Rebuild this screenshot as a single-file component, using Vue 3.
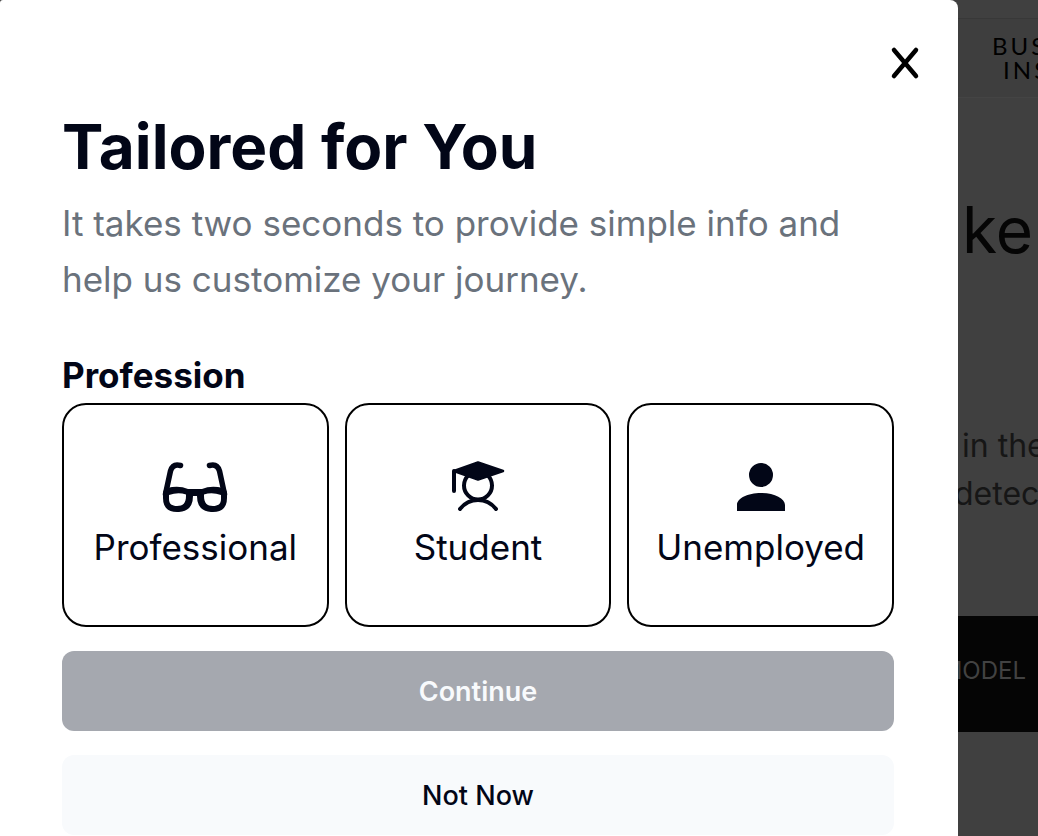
<script setup>
import { ref } from 'vue'

const options = ['Professional', 'Student', 'Unemployed']
const selected = ref('')
</script>

<template>
  <div class="screen">
    <div class="page" aria-hidden="true">
      <header class="brand">BUSINESS<br />INSIDER</header>
      <p class="headline">ke</p>
      <p class="copy">in the<br />detect</p>
      <div class="model">MODEL</div>
    </div>

    <section class="dialog" role="dialog" aria-labelledby="dialog-title">
      <div class="top">
        <button class="close" type="button" aria-label="Close">
          <svg viewBox="0 0 32 36" width="32" height="36">
            <path d="M5 5 27 31M27 5 5 31" fill="none" stroke="#000" stroke-width="4.5" stroke-linecap="round" />
          </svg>
        </button>
      </div>
      <h1 id="dialog-title">Tailored for You</h1>
      <p class="intro">It takes two seconds to provide simple info and help us customize your journey.</p>

      <h2 id="profession">Profession</h2>
      <div class="cards" role="group" aria-labelledby="profession">
        <button
          v-for="option in options"
          :key="option"
          class="card"
          type="button"
          :aria-pressed="selected === option"
          @click="selected = option"
        >
          <svg v-if="option === 'Professional'" class="icon" viewBox="0 0 72 72">
            <path d="M21.500 14.500C16 13 13 15 11.500 20L6.500 43M50.500 14.500C56 13 59 15 60.500 20L65.500 43" fill="none" stroke="currentColor" stroke-width="5.5" stroke-linecap="round" />
            <path fill="currentColor" fill-rule="evenodd" d="M4 43Q4 38 8 37Q20 34 29 38H43Q52 34 64 37Q68 38 68 43V47Q68 61 54 61H52Q38 60 38 45H34Q34 60 20 61H18Q4 61 4 47ZM10 44V48C10 53 13 55 18 55C24 55 27 52 27 45V43.500Q19 41 10 44ZM45 43.500V45C45 52 48 55 54 55C59 55 62 53 62 48V44Q53 41 45 43.500Z" />
          </svg>
          <svg v-else-if="option === 'Student'" class="icon" viewBox="0 0 72 72">
            <circle cx="36" cy="34.5" r="14" fill="none" stroke="currentColor" stroke-width="4" />
            <path d="M12 20V40M18 58Q25 49 36 49T54 58" fill="none" stroke="currentColor" stroke-width="4" stroke-linecap="round" />
            <path d="m36 11.500 25 8.500-25 8.500-24-8.500Z" fill="currentColor" stroke="currentColor" stroke-width="2.5" stroke-linejoin="round" />
          </svg>
          <svg v-else class="icon" viewBox="0 0 24 24">
            <path fill="currentColor" d="M12 4a4 4 0 1 1 0 8a4 4 0 0 1 0-8m0 10c4.420 0 8 1.790 8 4v2H4v-2c0-2.210 3.580-4 8-4" />
          </svg>
          <span>{{ option }}</span>
        </button>
      </div>

      <button class="action continue" type="button">Continue</button>
      <button class="action later" type="button">Not Now</button>
    </section>
  </div>
</template>

<style>
body {
  background: #404040;
}
</style>

<style scoped>
* {
  box-sizing: border-box;
}
.screen {
  position: relative;
  height: 100vh;
  overflow: hidden;
  background: #404040;
  font-family: Inter, "Liberation Sans", sans-serif;
}
button {
  font: inherit;
  cursor: pointer;
}
h1,
h2,
p {
  margin: 0;
}
.page {
  display: flex;
  flex-direction: column;
  padding: 18px 0 0 calc(100% - 84px);
  height: 100%;
  white-space: nowrap;
}
.brand {
  width: max-content;
  height: 80px;
  padding: 15px 0 0 38px;
  border-top: 1px solid #383838;
  border-bottom: 1px solid #444;
  background: #3e3e3e;
  color: #000;
  font: 24px/24px Lato, sans-serif;
  letter-spacing: 3px;
  text-align: center;
}
.headline {
  margin-top: 92px;
  padding-left: 8px;
  color: #050505;
  font-size: 64px;
  line-height: 80px;
}
.copy {
  margin-top: 152px;
  color: #161616;
  font-size: 32px;
  line-height: 48px;
  text-indent: 8px;
}
.model {
  display: flex;
  align-items: center;
  justify-content: flex-end;
  height: 116px;
  margin-top: 98px;
  padding: 0 12px 8px 0;
  background: #050505;
  color: #424242;
  font-size: 24px;
}
.dialog {
  position: absolute;
  top: 0;
  left: 0;
  display: flex;
  flex-direction: column;
  width: calc(100% - 80px);
  min-height: 100%;
  padding: 45px 64px 0 62px;
  border-radius: 3px 8px 0 0;
  background: #fff;
  color: #020617;
}
.top {
  display: flex;
  justify-content: flex-end;
  height: 70px;
  margin-right: -27px;
}
.close {
  width: 32px;
  height: 36px;
  padding: 0;
  border: 0;
  background: none;
}
svg {
  display: block;
}
h1 {
  font-size: 62px;
  line-height: 64px;
  font-weight: 700;
}
.intro {
  margin-top: 16px;
  color: #6a727c;
  font-size: 35px;
  line-height: 56px;
}
h2 {
  margin-top: 40px;
  font-size: 35px;
  line-height: 56px;
  font-weight: 700;
}
.cards {
  display: grid;
  grid-template-columns: repeat(3, minmax(0, 1fr));
  gap: 16px;
}
.card {
  display: flex;
  flex-direction: column;
  align-items: center;
  justify-content: center;
  height: 224px;
  padding: 0 0 8px;
  border: 2px solid #000;
  border-radius: 24px;
  background: #fff;
  color: #020617;
  font-size: 35px;
  line-height: 48px;
}
.icon {
  width: 72px;
  height: 72px;
}
.action {
  height: 80px;
  margin-top: 24px;
  padding: 0;
  border: 0;
  border-radius: 12px;
  font-size: 27px;
  font-weight: 500;
}
.continue {
  background: #a5a8af;
  color: #f8fafc;
  font-weight: 600;
}
.later {
  background: #f8fafc;
  color: #020617;
}
</style>
